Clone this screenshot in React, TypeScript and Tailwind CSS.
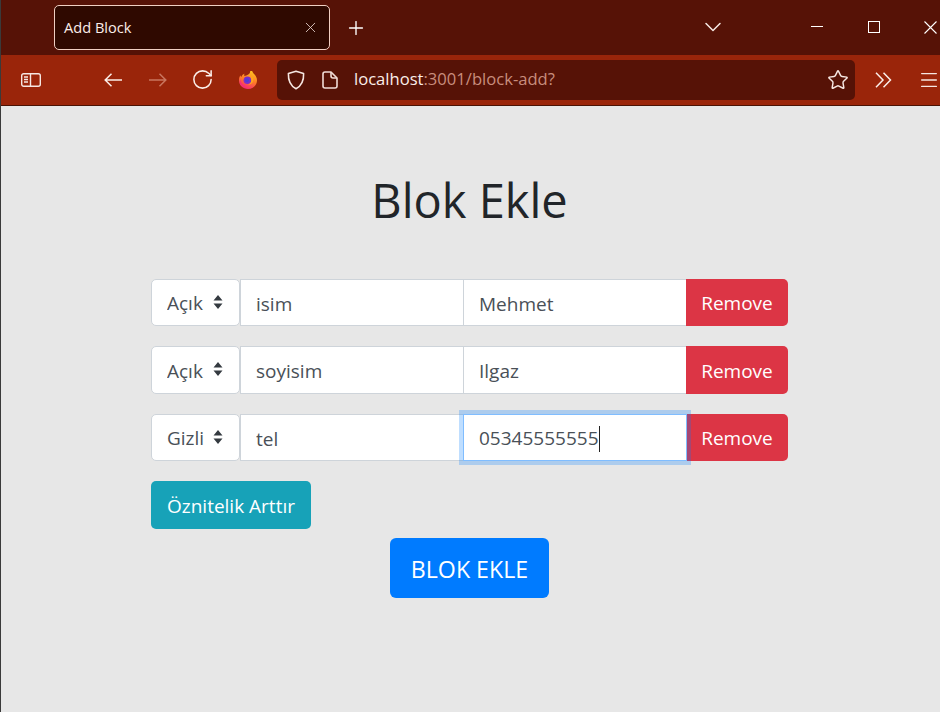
import { ChevronDown, Plus, X, RotateCw, Star, Menu } from 'lucide-react'

const fontClass = "font-['Open_Sans',sans-serif]"

function FirefoxLogo() {
  return (
    <svg width="20" height="20" viewBox="0 0 20 20">
      <defs>
        <linearGradient id="ffBody" x1="0.7" y1="0" x2="0.3" y2="1">
          <stop offset="0" stopColor="#ffc21f" />
          <stop offset="0.5" stopColor="#ff7a26" />
          <stop offset="1" stopColor="#f5217e" />
        </linearGradient>
      </defs>
      <path d="M14.2 1c.4 1.6 1.2 2.2 2.4 3.6 1.4 1.7 2.4 3.6 2.4 5.6 0 4.9-4 8.8-9 8.8s-9-3.9-9-8.8c0-1.8.4-3.4 1.4-4.9.1.9.4 1.4.9 1.8.5-1.6 1.5-2.7 3.2-3.3-.5 1-.4 1.6 0 2.1 2.5-.5 5.8-1.8 5.7-4.9z" fill="url(#ffBody)" />
      <circle cx="9.4" cy="10.2" r="3.8" fill="#7b2fc9" />
      <circle cx="9" cy="10.2" r="2" fill="#4b3fd6" />
      <path d="M12.6 5.200c2.200 1 3.200 3.200 2.600 5.600-.6 2.400-2.800 4-5.200 4 2-.8 3.200-2.200 3.300-4.200.1-2-.2-3.800-.7-5.400z" fill="#ffa51f" />
      <path d="M2.400 9.600c.5 4 3.400 6.400 7 6.600-3-.1-5.600 1-7.400-2.200-.5-1.400-.2-3 .4-4.400z" fill="#f82f75" />
    </svg>
  )
}

function SidebarIcon() {
  return (
    <svg width="20" height="14" viewBox="0 0 20 14" fill="none" stroke="#f6e7e2" strokeWidth="1.4">
      <rect x="0.7" y="0.7" width="18.6" height="12.6" rx="2" />
      <path d="M9.500 1v12" />
      <path d="M3 4h4M3 6.500h4M3 9h4" />
    </svg>
  )
}

function ShieldIcon() {
  return (
    <svg width="18" height="20" viewBox="0 0 18 20" fill="none" stroke="#f6e7e2" strokeWidth="1.6" strokeLinejoin="round">
      <path d="M9 1.200 16.600 3.600c.3 6.800-1.800 12-7.600 15.200C3.200 15.600 1.100 10.400 1.400 3.600z" />
    </svg>
  )
}

function PageIcon() {
  return (
    <svg width="16" height="18" viewBox="0 0 16 18" fill="none" stroke="#f0dcd6" strokeWidth="1.6" strokeLinejoin="round">
      <path d="M3 1h6l6 6v8a2 2 0 0 1-2 2H3a2 2 0 0 1-2-2V3a2 2 0 0 1 2-2z" />
      <path d="M9 1v4a2 2 0 0 0 2 2h4" />
    </svg>
  )
}

function NavArrow({ color, flip }: { color: string; flip?: boolean }) {
  return (
    <svg width="18" height="14" viewBox="0 0 18 14" fill="none" stroke={color} strokeWidth="1.5" className={flip ? 'scale-x-[-1]' : ''}>
      <path d="M18 7H1.200M7.500.800 1.200 7l6.300 6.200" />
    </svg>
  )
}

function TitleBar() {
  return (
    <div className="flex h-[55px] bg-[#561206]">
      <div className="mt-[5px] ml-[53px] flex h-[45px] w-[276px] items-center rounded-[5px] border border-[#f0cfc2] bg-[#2f0900] pr-[10px] pl-[9px]">
        <span className="flex-1 pt-[1px] text-[14.6px] text-[#fbeee9]">Add Block</span>
        <X size={17} strokeWidth={1.2} className="text-[#e6d5cf]" />
      </div>
      <Plus size={22} strokeWidth={1.5} className="mt-[17px] ml-[15px] text-white" />
      <ChevronDown size={28} strokeWidth={1.3} className="mt-[13px] ml-[332px] text-[#f6e7e2]" />
      <div className="mt-[26px] ml-[84px] h-[1px] w-[12px] bg-white" />
      <div className="mt-[21px] ml-[45px] h-[12px] w-[12px] border border-white" />
      <svg width="13" height="13" viewBox="0 0 13 13" stroke="#fff" strokeWidth="1.1" className="mt-[21px] ml-[44px]">
        <path d="M.5.500l12 12M12.500.500l-12 12" />
      </svg>
    </div>
  )
}

function Toolbar() {
  return (
    <div className="flex h-[51px] items-center border-b border-[#4a1204] bg-[#9a250a] pb-[1px]">
      <div className="ml-[20px]"><SidebarIcon /></div>
      <div className="ml-[63px]"><NavArrow color="#fbeee9" /></div>
      <div className="ml-[27px]"><NavArrow color="#c9765f" flip /></div>
      <RotateCw size={23} strokeWidth={1.6} className="ml-[24px] text-[#fbeee9]" />
      <div className="ml-[24px]"><FirefoxLogo /></div>
      <div className="ml-[19px] flex h-[40px] w-[578px] items-center rounded-[5px] bg-[#561206] pl-[10px]">
        <ShieldIcon />
        <div className="ml-[17px]"><PageIcon /></div>
        <span className="ml-[15px] flex-1 pl-[1px] text-[16.6px] text-[#fbeee9]">
          localhost<span className="text-[#c88d7d]">:3001/block-add?</span>
        </span>
        <Star size={22} strokeWidth={1.6} className="mr-[8px] translate-x-[2px] text-[#f6e7e2]" />
      </div>
      <svg width="17" height="16" viewBox="0 0 17 16" fill="none" stroke="#fbeee9" strokeWidth="1.5" className="ml-[20px]">
        <path d="M1 .800 8 8l-7 7.200M8.500.800 15.500 8l-7 7.200" />
      </svg>
      <Menu size={22} strokeWidth={1.5} className="ml-[26px] text-[#f6e7e2]" />
    </div>
  )
}

function VisibilitySelect({ value }: { value: string }) {
  return (
    <div className="relative h-full w-[89px] shrink-0">
      <select
        defaultValue={value}
        className="h-full w-full appearance-none rounded-[5px] border border-[#ced4da] bg-white pt-[2px] pl-[15px] text-[19px] text-[#495057] outline-none"
      >
        <option>Açık</option>
        <option>Gizli</option>
      </select>
      <svg width="10" height="16" viewBox="0 0 10 16" className="absolute top-[15px] left-[62px]" fill="#343a40">
        <path d="M5 1 9.500 6.500H.5zM5 15 .5 9.500h9z" />
      </svg>
    </div>
  )
}

function AttributeRow({ kind, name, value, focused }: { kind: string; name: string; value: string; focused?: boolean }) {
  return (
    <div className="mb-[20px] flex h-[47.5px]">
      <VisibilitySelect value={kind} />
      <input
        readOnly
        defaultValue={name}
        className="h-full w-[224px] border border-[#ced4da] bg-white px-[15px] pt-[2px] text-[19px] text-[#495057] outline-none"
      />
      {focused ? (
        <div className="relative z-10 -mr-[1px] -ml-[1px] flex h-full w-[224px] items-center border border-[#80bdff] bg-white px-[15px] pt-[2px] text-[19px] text-[#495057] shadow-[0_0_0_4px_rgba(0,123,255,0.25)]">
          {value}
          <span className="h-[26px] w-[1px] bg-[#222]" />
        </div>
      ) : (
        <input
          readOnly
          defaultValue={value}
          className="h-full w-[222px] border-y border-[#ced4da] bg-white px-[15px] pt-[2px] text-[19px] text-[#495057] outline-none"
        />
      )}
      <button
        type="button"
        className="h-full w-[102px] rounded-r-[5px] bg-[#dc3545] pt-[2px] text-[19px] text-white"
      >
        Remove
      </button>
    </div>
  )
}

export default function App() {
  return (
    <div className={`h-[712px] w-[940px] overflow-hidden border-l border-[#3a3a3a] bg-[#e7e7e7] ${fontClass}`}>
      <TitleBar />
      <Toolbar />
      <main className="ml-[150px] w-[637px] pt-[64.8px]">
        <h1 className="mb-[50px] text-center text-[47px] leading-[58px] text-[#212529]">Blok Ekle</h1>
        <AttributeRow kind="Açık" name="isim" value="Mehmet" />
        <AttributeRow kind="Açık" name="soyisim" value="Ilgaz" />
        <AttributeRow kind="Gizli" name="tel" value="05345555555" focused />
        <button type="button" className="block h-[47.5px] w-[160px] rounded-[5px] bg-[#17a2b8] pt-[2px] text-[19px] text-white">
          Öznitelik Arttır
        </button>
        <div className="mt-[9.7px] flex justify-center">
          <button type="button" className="h-[60px] w-[159px] rounded-[6px] bg-[#007bff] pt-[2px] text-[23.2px] text-white">
            BLOK EKLE
          </button>
        </div>
      </main>
    </div>
  )
}
